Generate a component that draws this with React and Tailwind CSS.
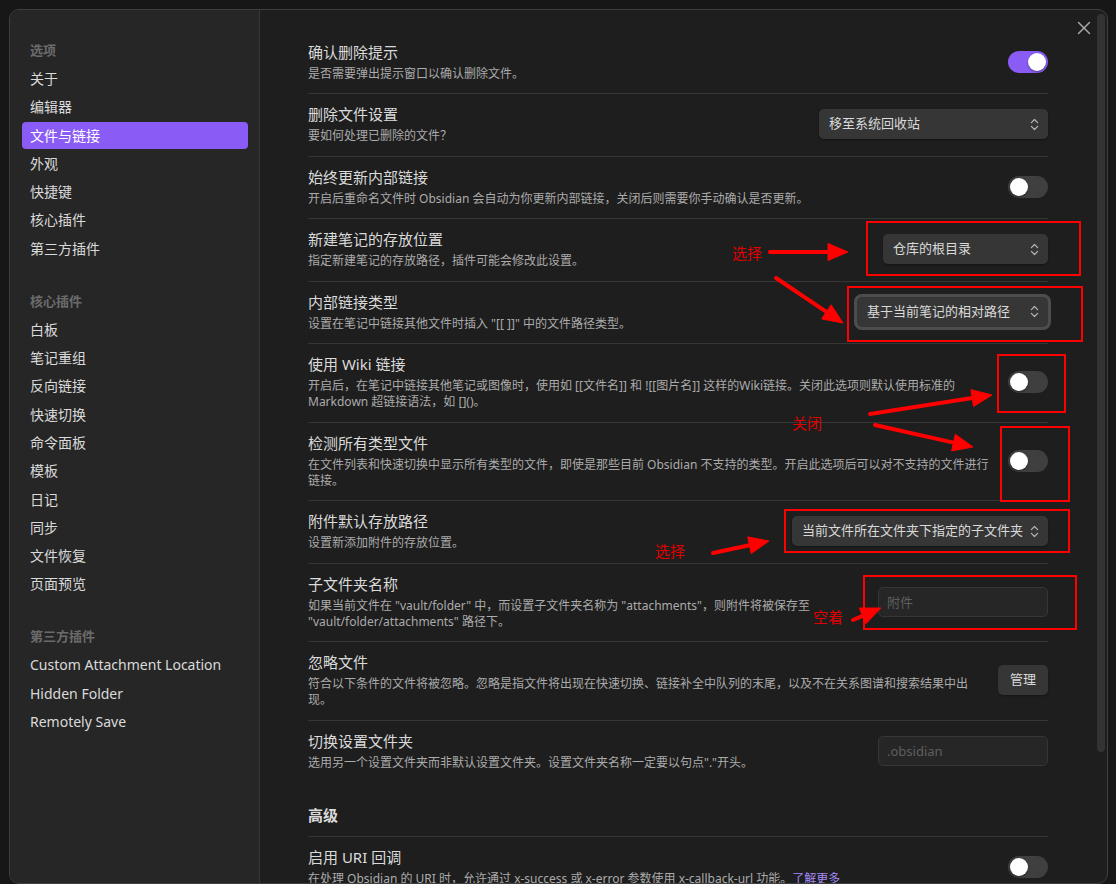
import { X } from "lucide-react";
import clsx from "clsx";

const FONT = "font-['Noto_Sans','Noto_Sans_CJK_SC',sans-serif]";

const NAV_GROUPS = [
  {
    title: "选项",
    items: ["关于", "编辑器", "文件与链接", "外观", "快捷键", "核心插件", "第三方插件"],
  },
  {
    title: "核心插件",
    items: ["白板", "笔记重组", "反向链接", "快速切换", "命令面板", "模板", "日记", "同步", "文件恢复", "页面预览"],
  },
  {
    title: "第三方插件",
    items: ["Custom Attachment Location", "Hidden Folder", "Remotely Save"],
  },
];

const ACTIVE_ITEM = "文件与链接";

// red markup drawn over the screenshot
const BOXES = [
  [867, 222, 213, 53],
  [848, 287, 234, 54],
  [998, 355, 67, 57],
  [1001, 427, 68, 74],
  [785, 510, 284, 42],
  [864, 576, 212, 53],
];

const ARROWS = [
  [770, 252, 848, 252],
  [776, 278, 843, 323],
  [870, 414, 992, 395],
  [875, 425, 973, 447],
  [713, 553, 769, 541],
  [853, 620, 881, 608],
];

const NOTES = [
  { text: "选择", cls: "left-[732px] top-[243px]" },
  { text: "关闭", cls: "left-[792px] top-[413px]" },
  { text: "选择", cls: "left-[655px] top-[541px]" },
  { text: "空着", cls: "left-[813px] top-[607px]" },
];

function Toggle({ on }) {
  return (
    <div
      className={clsx(
        "relative h-[22px] w-[40px] shrink-0 rounded-full",
        on ? "bg-[#8a5cf5]" : "bg-[#3f3f3f]"
      )}
    >
      <div
        className={clsx(
          "absolute top-[2px] h-[18px] w-[18px] rounded-full bg-white shadow-[0_1px_2px_rgba(0,0,0,0.4)]",
          on ? "left-[20px]" : "left-[2px]"
        )}
      />
    </div>
  );
}

function UpDown() {
  return (
    <svg
      width="15"
      height="15"
      viewBox="0 0 24 24"
      fill="none"
      stroke="#b3b3b3"
      strokeWidth="2"
      strokeLinecap="round"
      strokeLinejoin="round"
    >
      <path d="m7 15 5 5 5-5" />
      <path d="m7 9 5-5 5 5" />
    </svg>
  );
}

function Select({ label, className, focused }) {
  return (
    <div
      className={clsx(
        "flex h-[30px] shrink-0 items-center justify-between rounded-[5px] bg-[#363636] pl-[10px] pr-[6px] text-[13px] text-[#dadada] shadow-[0_1px_2px_rgba(0,0,0,0.35)]",
        focused && "ring-[3px] ring-[#4d4d4d]",
        className
      )}
    >
      <span className="whitespace-nowrap">{label}</span>
      <UpDown />
    </div>
  );
}

function TextBox({ placeholder }) {
  return (
    <input
      readOnly
      placeholder={placeholder}
      className={clsx(
        FONT,
        "h-[30px] w-[170px] shrink-0 rounded-[5px] border border-[#363636] bg-[#262626] px-[8px] text-[13px] text-[#dadada] outline-none placeholder:text-[#5f5f5f]"
      )}
    />
  );
}

function SettingRow({ title, desc, control, first }) {
  return (
    <div
      className={clsx(
        "flex items-center pb-[11.5px] pt-[10px]",
        !first && "border-t border-[#363636]"
      )}
    >
      <div className="mr-[12px] min-w-0 flex-1">
        <div className="text-[15px] leading-[20px] text-[#dadada]">{title}</div>
        <div className="mt-[4px] text-[12px] leading-[16px] text-[#ababab]">{desc}</div>
      </div>
      {control}
    </div>
  );
}

function Sidebar() {
  return (
    <div className="w-[250px] shrink-0 border-r border-[#363636] bg-[#262626] pl-[12px] pr-[11px] pt-[25px]">
      {NAV_GROUPS.map((group, gi) => (
        <div key={group.title} className={clsx(gi > 0 && "mt-[24px]")}>
          <div className="pl-[8px] text-[13px] font-semibold leading-[30px] text-[#6b6b6b]">
            {group.title}
          </div>
          {group.items.map((item) => (
            <div
              key={item}
              className={clsx(
                "mb-[1.3px] flex h-[27px] items-center rounded-[4px] pl-[8px] text-[14px]",
                item === ACTIVE_ITEM ? "bg-[#8a5cf5] text-white" : "text-[#dadada]"
              )}
            >
              {item}
            </div>
          ))}
        </div>
      ))}
    </div>
  );
}

function Settings() {
  return (
    <div className="ml-[48px] w-[740px] shrink-0 pt-[21.5px]">
      <SettingRow
        first
        title="确认删除提示"
        desc="是否需要弹出提示窗口以确认删除文件。"
        control={<Toggle on />}
      />
      <SettingRow
        title="删除文件设置"
        desc="要如何处理已删除的文件？"
        control={<Select label="移至系统回收站" className="w-[229px]" />}
      />
      <SettingRow
        title="始终更新内部链接"
        desc="开启后重命名文件时 Obsidian 会自动为你更新内部链接，关闭后则需要你手动确认是否更新。"
        control={<Toggle />}
      />
      <SettingRow
        title="新建笔记的存放位置"
        desc="指定新建笔记的存放路径，插件可能会修改此设置。"
        control={<Select label="仓库的根目录" className="w-[165px]" />}
      />
      <SettingRow
        title="内部链接类型"
        desc={'设置在笔记中链接其他文件时插入 "[[ ]]" 中的文件路径类型。'}
        control={<Select label="基于当前笔记的相对路径" className="w-[191px]" focused />}
      />
      <SettingRow
        title="使用 Wiki 链接"
        desc={
          <>
            开启后，在笔记中链接其他笔记或图像时，使用如 [[文件名]] 和 ![[图片名]] 这样的Wiki链接。关闭此选项则默认使用标准的
            <br />
            Markdown 超链接语法，如 []()。
          </>
        }
        control={<Toggle />}
      />
      <SettingRow
        title="检测所有类型文件"
        desc={
          <>
            在文件列表和快速切换中显示所有类型的文件，即使是那些目前 Obsidian 不支持的类型。开启此选项后可以对不支持的文件进行
            <br />
            链接。
          </>
        }
        control={<Toggle />}
      />
      <SettingRow
        title="附件默认存放路径"
        desc="设置新添加附件的存放位置。"
        control={<Select label="当前文件所在文件夹下指定的子文件夹" className="w-[256px]" />}
      />
      <SettingRow
        title="子文件夹名称"
        desc={
          <>
            如果当前文件在 "vault/folder" 中，而设置子文件夹名称为 "attachments"，则附件将被保存至
            <br />
            "vault/folder/attachments" 路径下。
          </>
        }
        control={<TextBox placeholder="附件" />}
      />
      <SettingRow
        title="忽略文件"
        desc={
          <>
            符合以下条件的文件将被忽略。忽略是指文件将出现在快速切换、链接补全中队列的末尾，以及不在关系图谱和搜索结果中出
            <br />
            现。
          </>
        }
        control={
          <button className="h-[30px] shrink-0 rounded-[5px] bg-[#363636] px-[12px] text-[13px] text-[#dadada] shadow-[0_1px_2px_rgba(0,0,0,0.35)]">
            管理
          </button>
        }
      />
      <SettingRow
        title="切换设置文件夹"
        desc={'选用另一个设置文件夹而非默认设置文件夹。设置文件夹名称一定要以句点"."开头。'}
        control={<TextBox placeholder=".obsidian" />}
      />

      <div className="mt-[22.5px] pb-[11px] text-[15px] font-semibold leading-[20px] text-[#dadada]">
        高级
      </div>

      <SettingRow
        title="启用 URI 回调"
        desc={
          <>
            在处理 Obsidian 的 URI 时，允许通过 x-success 或 x-error 参数使用 x-callback-url 功能。
            <span className="text-[#a68af9] underline">了解更多</span>
          </>
        }
        control={<Toggle />}
      />
    </div>
  );
}

function arrowHead(x1, y1, x2, y2) {
  const len = Math.hypot(x2 - x1, y2 - y1);
  const ux = (x2 - x1) / len;
  const uy = (y2 - y1) / len;
  const bx = x2 - ux * 20;
  const by = y2 - uy * 20;
  const nx = -uy * 8.5;
  const ny = ux * 8.5;
  return {
    base: [bx, by],
    points: `${x2},${y2} ${bx + nx},${by + ny} ${bx - nx},${by - ny}`,
  };
}

function Markup() {
  return (
    <>
      <svg
        className="pointer-events-none absolute left-0 top-0"
        width="1116"
        height="884"
        viewBox="0 0 1116 884"
      >
        {BOXES.map(([x, y, w, h], i) => (
          <rect key={i} x={x} y={y} width={w} height={h} fill="none" stroke="#ff0000" strokeWidth="2" />
        ))}
        {ARROWS.map(([x1, y1, x2, y2], i) => {
          const head = arrowHead(x1, y1, x2, y2);
          return (
            <g key={i} fill="#ff0000" stroke="#ff0000">
              <line
                x1={x1}
                y1={y1}
                x2={head.base[0]}
                y2={head.base[1]}
                strokeWidth="4"
                strokeLinecap="round"
              />
              <polygon points={head.points} strokeWidth="1" strokeLinejoin="round" />
            </g>
          );
        })}
      </svg>
      {NOTES.map((note, i) => (
        <div
          key={i}
          className={clsx(
            "pointer-events-none absolute text-[15px] leading-[20px] text-[#e00000]",
            note.cls
          )}
        >
          {note.text}
        </div>
      ))}
    </>
  );
}

export default function App() {
  return (
    <div className={clsx(FONT, "relative h-[884px] w-[1116px] overflow-hidden bg-[#171717] pl-[9px] pt-[9px]")}>
      <div className="relative flex h-[875px] w-[1099px] overflow-hidden rounded-[10px] border border-[#3f3f3f] bg-[#1e1e1e]">
        <Sidebar />
        <div className="flex min-w-0 flex-1 overflow-hidden">
          <Settings />
          <div className="ml-[49px] w-[8px] shrink-0 pt-[4px]">
            <div className="h-[738px] rounded-full bg-[#333333]" />
          </div>
        </div>
        <button className="absolute right-[12px] top-[7px] text-[#a8a8a8]">
          <X size={22} strokeWidth={1.6} />
        </button>
      </div>
      <Markup />
    </div>
  );
}
